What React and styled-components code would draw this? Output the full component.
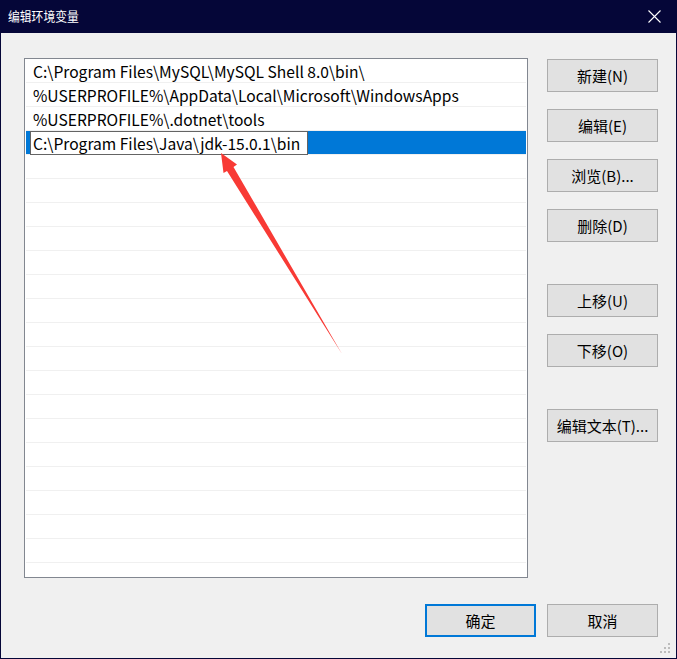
import React from "react";
import styled, { createGlobalStyle } from "styled-components";

const Global = createGlobalStyle`
  html, body { margin: 0; padding: 0; background: #f0f0f0; }
  body { font-family: "Noto Sans CJK SC", "Noto Sans", sans-serif; }
  * { box-sizing: border-box; }
`;

const Window = styled.div`
  position: relative;
  width: 677px;
  height: 659px;
  background: #f0f0f0;
  border: 1px solid #050638;
  border-top: none;
  display: flex;
  flex-direction: column;
`;

const TitleBar = styled.div`
  height: 33px;
  margin: 0 -1px;
  background: #050638;
  display: flex;
  align-items: center;
  justify-content: space-between;
  padding: 0 16px 0 8px;
  color: #ffffff;
  font-size: 11.8px;
  flex-shrink: 0;
`;

const Title = styled.span`
  line-height: 1;
  margin-top: -2px;
  transform: scaleY(1.08);
`;

const Body = styled.div`
  flex: 1;
  display: flex;
  flex-direction: column;
  padding: 25px 18px 21px 23px;
`;

const Main = styled.div`
  display: flex;
  gap: 19px;
`;

const List = styled.div`
  width: 504px;
  height: 520px;
  background: #ffffff;
  border: 1px solid #828790;
  padding: 0 1px;
  overflow: hidden;
`;

const Row = styled.div`
  position: relative;
  height: 24px;
  border-bottom: 1px solid #f0f0f0;
  background: ${(p) => (p.$selected ? "#0078d7" : "transparent")};
  display: flex;
  align-items: center;
  padding-left: 7px;
  font-size: 15.6px;
  color: #000000;
  white-space: nowrap;
`;

const EditBox = styled.div`
  position: absolute;
  left: 4px;
  top: 0;
  width: 278px;
  height: 24px;
  background: #ffffff;
  border: 1px solid #646464;
  display: flex;
  align-items: center;
  padding-left: 2px;
  font-size: 15.6px;
  color: #000000;
`;

const Side = styled.div`
  display: flex;
  flex-direction: column;
  padding-top: 1px;
`;

const Button = styled.button`
  width: 111px;
  height: 33px;
  margin-top: ${(p) => p.$mt || 0}px;
  background: #e1e1e1;
  border: ${(p) => (p.$default ? "2px solid #0078d7" : "1px solid #adadad")};
  font-family: "Noto Sans CJK SC", "Noto Sans", sans-serif;
  font-size: 15px;
  color: #000000;
  padding: 0;
  display: flex;
  align-items: center;
  justify-content: center;
  line-height: 1;
`;

const Footer = styled.div`
  margin-top: 26px;
  display: flex;
  justify-content: flex-end;
  gap: 11px;
`;

const Overlay = styled.svg`
  position: absolute;
  left: 0;
  top: 0;
  pointer-events: none;
`;

const Grip = styled.svg`
  position: absolute;
  right: 2px;
  bottom: 1px;
`;

const rows = [
  "C:\\Program Files\\MySQL\\MySQL Shell 8.0\\bin\\",
  "%USERPROFILE%\\AppData\\Local\\Microsoft\\WindowsApps",
  "%USERPROFILE%\\.dotnet\\tools",
];

export default function App() {
  const empties = Array.from({ length: 18 });
  return (
    <>
      <Global />
      <Window>
        <TitleBar>
          <Title>编辑环境变量</Title>
          <svg width="13" height="13" viewBox="0 0 13 13">
            <path d="M0.5 0.5 L12.5 12.5 M12.5 0.5 L0.5 12.5" stroke="#ffffff" strokeWidth="1.1" />
          </svg>
        </TitleBar>
        <Body>
          <Main>
            <List>
              {rows.map((r) => (
                <Row key={r}>{r}</Row>
              ))}
              <Row $selected>
                <EditBox>C:\Program Files\Java\jdk-15.0.1\bin</EditBox>
              </Row>
              {empties.map((_, i) => (
                <Row key={i} />
              ))}
            </List>
            <Side>
              <Button>新建(N)</Button>
              <Button $mt={17}>编辑(E)</Button>
              <Button $mt={17}>浏览(B)...</Button>
              <Button $mt={17}>删除(D)</Button>
              <Button $mt={42}>上移(U)</Button>
              <Button $mt={17}>下移(O)</Button>
              <Button $mt={42}>编辑文本(T)...</Button>
            </Side>
          </Main>
          <Footer>
            <Button $default>确定</Button>
            <Button>取消</Button>
          </Footer>
        </Body>
        <Overlay width="677" height="659" viewBox="0 0 677 659">
          <polygon
            points="220,153 236,164.5 232.5,167 341,354 226,171 222.5,173"
            fill="#f83a35"
          />
        </Overlay>
        <Grip width="14" height="14" viewBox="0 0 14 14">
          <g fill="#bcbcbc">
            <rect x="8" y="0" width="2" height="2" />
            <rect x="4" y="4" width="2" height="2" />
            <rect x="8" y="4" width="2" height="2" />
            <rect x="0" y="8" width="2" height="2" />
            <rect x="4" y="8" width="2" height="2" />
            <rect x="8" y="8" width="2" height="2" />
          </g>
        </Grip>
      </Window>
    </>
  );
}
